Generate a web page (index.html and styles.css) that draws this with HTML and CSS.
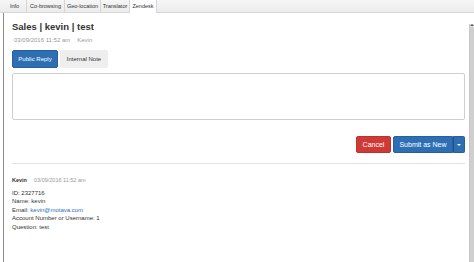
FILE: index.html
```html
<!DOCTYPE html>
<html lang="en">
<head>
  <meta charset="UTF-8">
  <title>Zendesk</title>
  <link rel="stylesheet" href="styles.css">
</head>
<body>
  <nav class="tabs">
    <a class="tab tab-info">Info</a>
    <a class="tab tab-cobrowse">Co-browsing</a>
    <a class="tab tab-geo">Geo-location</a>
    <a class="tab tab-translate">Translator</a>
    <a class="tab tab-zendesk active">Zendesk</a>
  </nav>

  <div class="frame">
    <main class="ticket">
      <h1 class="ticket-title">Sales | kevin | test</h1>
      <div class="ticket-meta">
        <span>03/09/2016 11:52 am</span>
        <span>Kevin</span>
      </div>

      <div class="reply-type">
        <button class="btn btn-primary">Public Reply</button>
        <button class="btn btn-light">Internal Note</button>
      </div>

      <div class="reply-box"></div>

      <div class="actions">
        <button class="btn btn-danger">Cancel</button>
        <div class="split">
          <button class="btn btn-primary split-main">Submit as New</button>
          <button class="btn btn-primary split-caret"><span class="caret"></span></button>
        </div>
      </div>

      <hr class="divider">

      <div class="comment">
        <div class="comment-head">
          <strong>Kevin</strong>
          <span>03/09/2016 11:52 am</span>
        </div>
        <div class="comment-body">
          ID: 2327716<br>
          Name: kevin<br>
          Email: <a href="#">kevin@motava.com</a><br>
          Account Number or Username: 1<br>
          Question: test
        </div>
      </div>
    </main>

    <div class="scrollbar">
      <div class="thumb"></div>
    </div>
  </div>
</body>
</html>
```

FILE: styles.css
```css
body {
  margin: 0;
  font-family: 'Liberation Sans', Arial, sans-serif;
  background: #fff;
  color: #222;
}
.tabs {
  height: 12px;
  background: linear-gradient(#f6f6f6, #ebebeb);
  border-bottom: 1px solid #d9d9d9;
  display: flex;
  padding-left: 3px;
}
.tab {
  font-size: 5.5px;
  line-height: 12px;
  color: #333;
  text-align: center;
  border-right: 1px solid #d6d6d6;
  box-sizing: border-box;
}
.tab-info { width: 24px; }
.tab-cobrowse { width: 38px; }
.tab-geo { width: 36px; }
.tab-translate { width: 29px; }
.tab-zendesk { width: 27px; }
.tab.active {
  background: #fff;
  height: 13px;
}
.frame {
  display: flex;
  height: 249px;
}
.ticket {
  flex: 1;
  border-left: 1px solid #8a8a8a;
  margin-left: 3px;
  padding: 8px 4px 0 8px;
}
.ticket-title {
  margin: 0;
  font-size: 9.5px;
  line-height: 11px;
  font-weight: bold;
  color: #333;
}
.ticket-meta {
  margin-top: 5px;
  margin-left: 2px;
  font-size: 6px;
  color: #999;
  display: flex;
  gap: 7px;
}
.reply-type {
  margin-top: 7px;
  display: flex;
  gap: 2px;
}
.btn {
  font-family: inherit;
  font-size: 6px;
  border: 1px solid transparent;
  border-radius: 2px;
  padding: 0;
  cursor: pointer;
}
.reply-type .btn {
  height: 18px;
  width: 46px;
}
.reply-type .btn-light {
  width: 48px;
}
.btn-primary {
  background: #2e6fb4;
  border-color: #285f9c;
  color: #fff;
}
.btn-light {
  background: #eeeeee;
  border-color: #eeeeee;
  color: #333;
}
.btn-danger {
  background: #cf3a36;
  border-color: #b93330;
  color: #fff;
}
.reply-box {
  margin-top: 5px;
  height: 45px;
  border: 1px solid #cfcfcf;
  border-radius: 2px;
}
.actions {
  margin-top: 16px;
  display: flex;
  justify-content: flex-end;
  gap: 2px;
}
.actions .btn {
  height: 17px;
  font-size: 7px;
}
.actions .btn-danger {
  width: 35px;
}
.split {
  display: flex;
}
.split-main {
  width: 60px;
  border-radius: 2px 0 0 2px;
}
.split-caret {
  width: 12px;
  border-left-color: #1f5288;
  border-radius: 0 2px 2px 0;
  display: flex;
  align-items: center;
  justify-content: center;
}
.caret {
  width: 0;
  height: 0;
  border-left: 2px solid transparent;
  border-right: 2px solid transparent;
  border-top: 2px solid #fff;
}
.divider {
  margin: 10px 0 0;
  border: 0;
  border-top: 1px solid #e3e3e3;
}
.comment-head {
  margin-top: 13px;
  font-size: 5.5px;
  display: flex;
  gap: 7px;
}
.comment-head strong {
  color: #333;
}
.comment-head span {
  color: #999;
}
.comment-body {
  margin-top: 6px;
  font-size: 6px;
  line-height: 8.4px;
  color: #333;
}
.comment-body a {
  color: #2a6ebb;
  text-decoration: none;
}
.scrollbar {
  width: 4px;
  margin-top: 11px;
  border-left: 1px solid #c8c8c8;
  background: #e6e6e6;
  position: relative;
}
.thumb {
  margin-top: 3px;
  height: 235px;
  background: #cfcfcf;
}
.scrollbar::before {
  content: '';
  position: absolute;
  top: 0;
  left: 0;
  border-left: 2px solid transparent;
  border-right: 2px solid transparent;
  border-bottom: 2px solid #555;
}
```
